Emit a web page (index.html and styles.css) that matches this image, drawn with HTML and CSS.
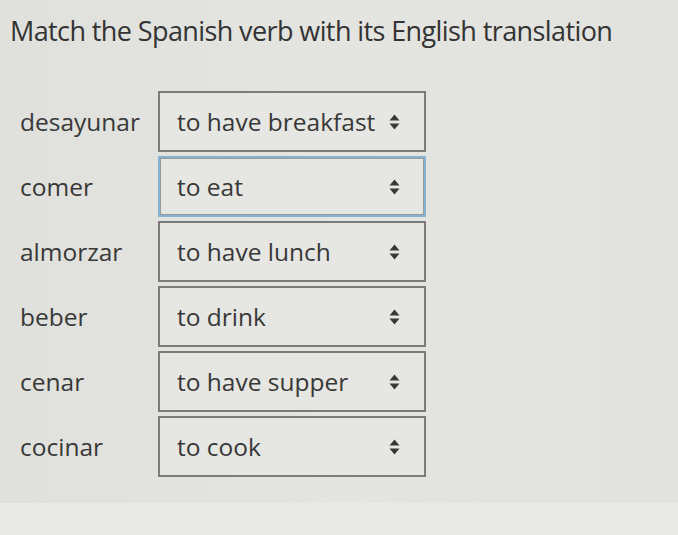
FILE: index.html
```html
<!DOCTYPE html>
<html>
<head>
<meta charset="utf-8">
<link rel="stylesheet" href="styles.css">
</head>
<body>
<div class="panel">
  <h1 class="title">Match the Spanish verb with its English translation</h1>
  <div class="rows">
    <div class="label">desayunar</div>
    <div class="select"><span>to have breakfast</span><svg class="arrow" width="11" height="16" viewBox="0 0 11 16"><path d="M5.5 0.5 L10.5 6.5 H0.5 Z M5.5 15.5 L10.5 9.5 H0.5 Z" fill="#383838"/></svg></div>
    <div class="label">comer</div>
    <div class="select focus"><span>to eat</span><svg class="arrow" width="11" height="16" viewBox="0 0 11 16"><path d="M5.5 0.5 L10.5 6.5 H0.5 Z M5.5 15.5 L10.5 9.5 H0.5 Z" fill="#383838"/></svg></div>
    <div class="label">almorzar</div>
    <div class="select"><span>to have lunch</span><svg class="arrow" width="11" height="16" viewBox="0 0 11 16"><path d="M5.5 0.5 L10.5 6.5 H0.5 Z M5.5 15.5 L10.5 9.5 H0.5 Z" fill="#383838"/></svg></div>
    <div class="label">beber</div>
    <div class="select"><span>to drink</span><svg class="arrow" width="11" height="16" viewBox="0 0 11 16"><path d="M5.5 0.5 L10.5 6.5 H0.5 Z M5.5 15.5 L10.5 9.5 H0.5 Z" fill="#383838"/></svg></div>
    <div class="label">cenar</div>
    <div class="select"><span>to have supper</span><svg class="arrow" width="11" height="16" viewBox="0 0 11 16"><path d="M5.5 0.5 L10.5 6.5 H0.5 Z M5.5 15.5 L10.5 9.5 H0.5 Z" fill="#383838"/></svg></div>
    <div class="label">cocinar</div>
    <div class="select"><span>to cook</span><svg class="arrow" width="11" height="16" viewBox="0 0 11 16"><path d="M5.5 0.5 L10.5 6.5 H0.5 Z M5.5 15.5 L10.5 9.5 H0.5 Z" fill="#383838"/></svg></div>
  </div>
</div>
```

FILE: styles.css
```css
html, body {
  margin: 0;
  padding: 0;
}
body {
  width: 678px;
  height: 535px;
  overflow: hidden;
  background: #e9e9e5;
  font-family: "Open Sans", "Noto Sans", sans-serif;
  color: #3b3b3b;
}
.panel {
  height: 503px;
  box-sizing: border-box;
  padding: 15px 0 0 10px;
  background: linear-gradient(90deg, #e0e0dc 0%, #e4e4e0 50%, #e2e2de 100%);
}
.title {
  margin: 0;
  font-size: 27px;
  font-weight: 400;
  line-height: 32px;
  letter-spacing: -0.6px;
  color: #333;
}
.rows {
  margin-top: 44px;
  display: grid;
  grid-template-columns: 148px 268px;
  grid-auto-rows: 61px;
  row-gap: 4px;
  align-items: center;
}
.label {
  padding-left: 10px;
  font-size: 24.5px;
  color: #383838;
}
.select {
  height: 61px;
  box-sizing: border-box;
  border: 2px solid #7b7b7b;
  background: #e6e6e2;
  display: flex;
  align-items: center;
  justify-content: space-between;
  padding: 0 24px 0 17px;
  font-size: 24.5px;
  color: #383838;
}
.select.focus {
  border-color: #86b3d3;
  box-shadow: inset 0 0 0 1px #9a9a9a;
}
.arrow {
  display: block;
}
```
